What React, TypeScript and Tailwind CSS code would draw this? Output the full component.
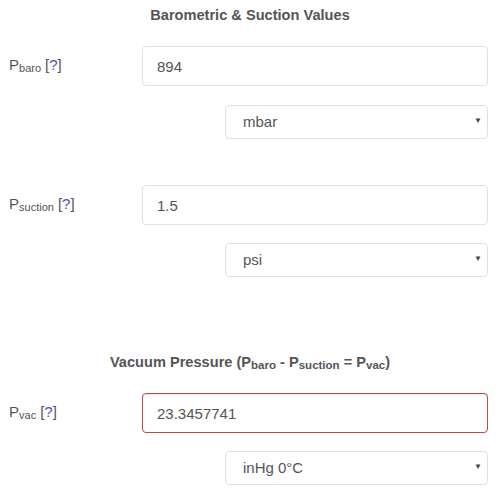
import { ReactNode } from 'react';

function Help() {
    return (
        <span className="ml-[4px]">
            [<span className="text-[#4f4fc9]">?</span>]
        </span>
    );
}

function Label({ sub }: { sub: string }) {
    return (
        <label className="w-[142px] shrink-0 pl-[9px] text-[15px] leading-[18px]">
            P<span className="text-[11px] align-[-2px]">{sub}</span>
            <Help />
        </label>
    );
}

function ValueRow({ sub, value, error }: { sub: string; value: string; error?: boolean }) {
    return (
        <div className="flex items-center">
            <Label sub={sub} />
            <input
                type="text"
                defaultValue={value}
                className={
                    'block w-[346px] h-[40px] rounded-[4px] border bg-white px-[14px] text-[15px] text-[#555] outline-none ' +
                    (error
                        ? 'border-[#b94a48] shadow-[inset_0_1px_1px_rgba(0,0,0,0.075)]'
                        : 'border-[#e1e1e1]')
                }
            />
        </div>
    );
}

function UnitSelect({ value, options, className }: { value: string; options: string[]; className: string }) {
    return (
        <div className={'relative ml-[225px] w-[263px] ' + className}>
            <select
                defaultValue={value}
                className="block w-full h-[34px] appearance-none rounded-[4px] border border-[#e1e1e1] bg-white pl-[17px] pr-[30px] text-[15px] text-[#555] outline-none"
            >
                {options.map((o) => (
                    <option key={o}>{o}</option>
                ))}
            </select>
            <span className="pointer-events-none absolute right-[6px] top-[11px] text-[8px] leading-[10px] text-[#444]">▼</span>
        </div>
    );
}

function Heading({ children, className }: { children: ReactNode; className?: string }) {
    return <h3 className={'text-center text-[14.6px] font-bold leading-[16px] ' + (className ?? '')}>{children}</h3>;
}

function Sub({ children }: { children: ReactNode }) {
    return <span className="text-[11.5px] align-[-2px]">{children}</span>;
}

const units = ['mbar', 'bar', 'psi', 'kPa', 'inHg 0°C'];

export default function App() {
    return (
        <div className="w-[500px] h-[498px] bg-white font-['Liberation_Sans',Arial,sans-serif] text-[#555]">
            <Heading className="pt-[7px]">Barometric &amp; Suction Values</Heading>

            <div className="mt-[23px]">
                <ValueRow sub="baro" value="894" />
            </div>
            <UnitSelect value="mbar" options={units} className="mt-[19px]" />

            <div className="mt-[46px]">
                <ValueRow sub="suction" value="1.5" />
            </div>
            <UnitSelect value="psi" options={units} className="mt-[18px]" />

            <Heading className="mt-[77px]">
                Vacuum Pressure (P<Sub>baro</Sub> - P<Sub>suction</Sub> = P<Sub>vac</Sub>)
            </Heading>

            <div className="mt-[20px]">
                <ValueRow sub="vac" value="23.3457741" error />
            </div>
            <UnitSelect value="inHg 0°C" options={units} className="mt-[18px]" />
        </div>
    );
}
